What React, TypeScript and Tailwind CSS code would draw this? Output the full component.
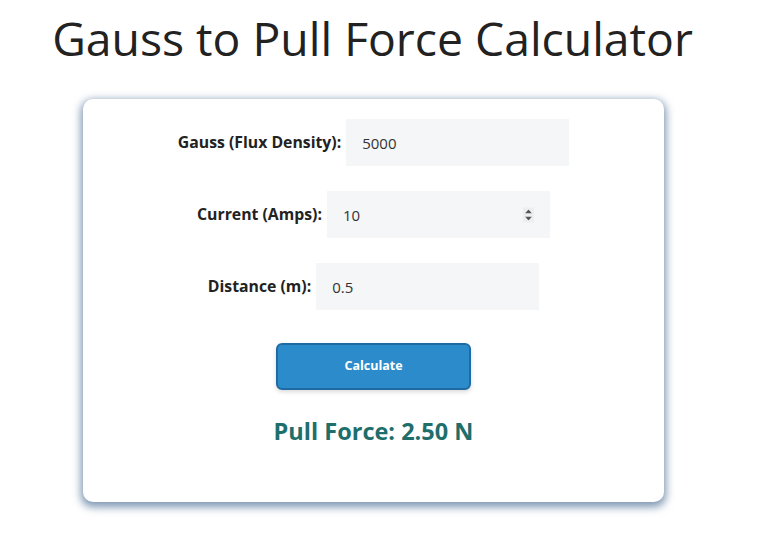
import React from "react";

function Row({ label, value, spinner }: { label: string; value: string; spinner?: boolean }) {
  return (
    <div className="flex items-center justify-center gap-[5px]">
      <label className="text-[15.8px] font-bold text-[#222]">{label}</label>
      <div className="relative">
        <input
          readOnly
          value={value}
          className="w-[223px] h-[47px] bg-[#f5f6f7] px-[16px] text-[15px] text-[#333] outline-none"
        />
        {spinner && (
          <div className="absolute right-[16px] top-1/2 -translate-y-1/2 flex flex-col items-center gap-[3px] bg-[#eceeef] px-[2px] py-[2px]">
            <svg width="7" height="4" viewBox="0 0 7 4"><path d="M0 4 L3.5 0 L7 4 Z" fill="#555" /></svg>
            <svg width="7" height="4" viewBox="0 0 7 4"><path d="M0 0 L3.5 4 L7 0 Z" fill="#555" /></svg>
          </div>
        )}
      </div>
    </div>
  );
}

export default function App() {
  return (
    <div className="w-[768px] h-[536px] bg-white overflow-hidden" style={{ fontFamily: '"Open Sans", sans-serif' }}>
      <h1 className="text-center text-[46.3px] leading-none text-[#222] pt-[16px] pr-[23px]">Gauss to Pull Force Calculator</h1>
      <div className="ml-[83px] w-[581px] mt-[37px] h-[403px] bg-white rounded-[10px] shadow-[0_3px_9px_2px_rgba(45,85,130,0.62)] flex flex-col items-center pt-[20px]">
        <div className="flex flex-col gap-[25px] w-full">
          <Row label="Gauss (Flux Density):" value="5000" />
          <Row label="Current (Amps):" value="10" spinner />
          <Row label="Distance (m):" value="0.5" />
        </div>
        <button className="mt-[33px] w-[195px] h-[47px] rounded-[6px] bg-[#2c8ccb] border-2 border-[#1f6aa3] text-white text-[12.5px] font-bold shadow-[0_2px_4px_rgba(0,0,0,0.15)]">
          Calculate
        </button>
        <div className="mt-[24px] text-[23.5px] font-bold text-[#1e6e6c]">Pull Force: 2.50 N</div>
      </div>
    </div>
  );
}
